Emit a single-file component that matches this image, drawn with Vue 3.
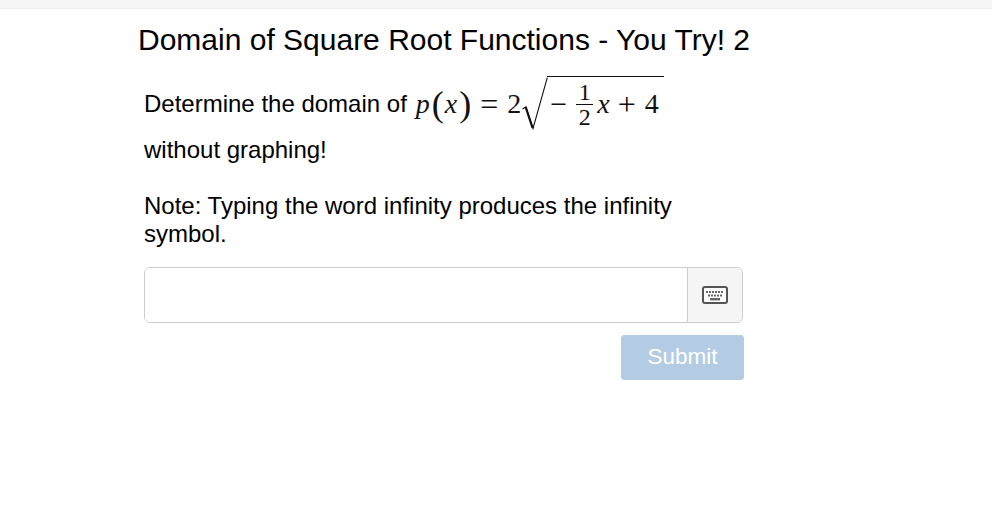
<script setup>
const title = 'Domain of Square Root Functions - You Try! 2'
</script>

<template>
  <div class="page">
    <div class="topbar"></div>
    <main class="content">
      <h1 class="title">{{ title }}</h1>
      <div class="body">
        <div class="line-math">
          <span>Determine the domain of</span>
          <span class="math">
            <i class="p">p</i><span class="paren open">(</span><i class="x">x</i><span class="paren close">)</span>
            <span class="eq">=</span><span class="two">2</span>
            <svg class="surd" width="26" height="53" viewBox="0 0 26 53">
              <path d="M0.5 32 L4 29.8 L11 51.5 L25.3 0.6" fill="none" stroke="#111" stroke-width="1.1" />
              <path d="M3.6 30 L10.6 51" fill="none" stroke="#111" stroke-width="2.2" />
            </svg>
            <span class="radicand">
              <span class="minus">−</span>
              <span class="frac"><span class="num">1</span><span class="den">2</span></span>
              <i class="x2">x</i><span class="plus">+</span><span class="four">4</span>
            </span>
          </span>
        </div>
        <p class="after">without graphing!</p>
        <p class="note">Note: Typing the word infinity produces the infinity symbol.</p>
        <div class="input-group">
          <div class="field"></div>
          <div class="kbd-btn">
            <svg width="26" height="18" viewBox="0 0 26 18">
              <rect x="1" y="1" width="24" height="16" rx="2" fill="#fff" stroke="#555" stroke-width="2" />
              <g fill="#666">
                <rect x="4" y="5" width="2" height="2" /><rect x="7" y="5" width="2" height="2" />
                <rect x="10" y="5" width="2" height="2" /><rect x="13" y="5" width="2" height="2" />
                <rect x="16" y="5" width="2" height="2" /><rect x="19" y="5" width="2" height="2" />
                <rect x="6" y="8.5" width="2" height="2" /><rect x="9" y="8.5" width="2" height="2" />
                <rect x="12" y="8.5" width="2" height="2" /><rect x="15" y="8.5" width="2" height="2" />
                <rect x="18" y="8.5" width="2" height="2" />
                <rect x="8" y="12" width="10" height="2.4" />
              </g>
            </svg>
          </div>
        </div>
        <div class="actions"><button class="submit" disabled>Submit</button></div>
      </div>
    </main>
  </div>
</template>

<style>
html, body { margin: 0; background: #fff; }
</style>

<style scoped>
.page {
  height: 524px;
  overflow: hidden;
  background: #fff;
  font-family: "Liberation Sans", Arial, sans-serif;
  color: #000;
}
.topbar {
  height: 8px;
  background: #f7f7f7;
  border-bottom: 1px solid #eee;
}
.content { padding-left: 138px; }
.title {
  margin: 0;
  padding-top: 14px;
  font-size: 30px;
  line-height: 34px;
  font-weight: 400;
  white-space: nowrap;
}
.body { width: 600px; padding-left: 6px; font-size: 24px; line-height: 28px; }
.line-math {
  display: flex;
  align-items: center;
  gap: 9px;
  height: 56px;
  margin-top: 19px;
}
.math {
  display: flex;
  align-items: center;
  height: 56px;
  font-family: "Liberation Serif", "Times New Roman", serif;
  font-size: 28px;
  color: #111;
}
.paren { font-size: 36px; line-height: 1; }
.open { margin-left: 2px; }
.x { margin-left: 1px; }
.close { margin-left: 2px; }
.eq { margin: 0 9px 0 9px; font-size: 32px; }
.surd { flex: none; margin-left: 1px; margin-top: 0; margin-bottom: 2px; }
.radicand {
  display: flex;
  align-items: center;
  height: 55px;
  margin-left: -1px;
  border-top: 1.2px solid #111;
  padding: 0 5px 0 3px;
  margin-bottom: 1px;
}
.minus { margin-right: 9px; font-size: 30px; }
.frac {
  display: flex;
  flex-direction: column;
  align-items: center;
  width: 17px;
  font-size: 24px;
  line-height: 24px;
}
.num { border-bottom: 1px solid #111; width: 100%; text-align: center; }
.x2 { margin-left: 4px; }
.plus { margin: 0 9px 0 8px; font-size: 32px; }
.after { margin: 4px 0 0; }
.note { margin: 28px 0 0; }
.input-group {
  display: flex;
  width: 597px;
  height: 54px;
  margin-top: 19px;
  border: 1px solid #ccc;
  border-radius: 6px;
  overflow: hidden;
}
.field { flex: 1; background: #fff; }
.kbd-btn {
  width: 54px;
  display: flex;
  align-items: center;
  justify-content: center;
  background: #f5f5f5;
  border-left: 1px solid #ccc;
}
.actions { display: flex; justify-content: flex-end; margin-top: 12px; width: 600px; }
.submit {
  width: 123px;
  height: 45px;
  border: 1px solid #b5cde3;
  border-radius: 3px;
  background: #b4cce3;
  color: #fff;
  font-family: inherit;
  font-size: 22.5px;
  padding: 0 0 2px;
}
</style>
